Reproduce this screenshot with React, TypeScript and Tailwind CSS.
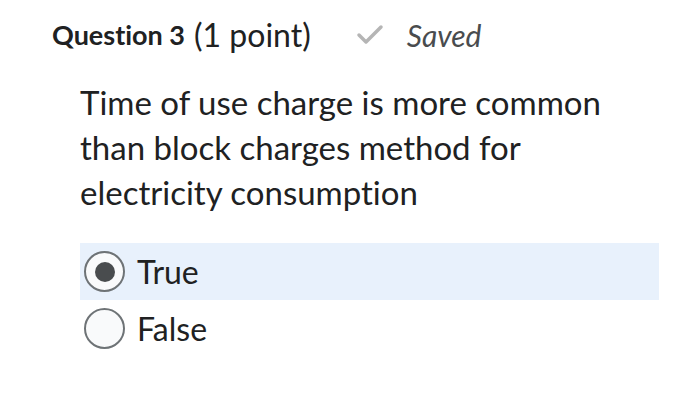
import React from 'react';

const options = [
  { label: 'True', checked: true },
  { label: 'False', checked: false },
];

export default function App() {
  return (
    <div className="w-[700px] h-[414px] bg-white text-[#202122] font-['Lato',sans-serif] [font-variant-ligatures:none]">
      <div className="pt-[23px] pl-[52px] flex items-center h-[47px]">
        <span className="text-[27px] font-bold">Question 3</span>
        <span className="text-[32px] ml-[9px]">(1 point)</span>
        <svg className="ml-[45px]" width="28" height="22" viewBox="0 0 28 22">
          <path d="M3 11 L10 18 L25 3" fill="none" stroke="#b5b5b5" strokeWidth="3.5" strokeLinecap="round" strokeLinejoin="round" />
        </svg>
        <span className="ml-[23px] text-[30px] italic text-[#494c4e]">Saved</span>
      </div>
      <p className="mt-[33px] ml-[80px] w-[560px] text-[33px] leading-[45px]">
        Time of use charge is more common than block charges method for electricity consumption
      </p>
      <div className="mt-[28px] ml-[80px] w-[579px]">
        {options.map((o) => (
          <div key={o.label} className={`flex items-center h-[57px] ${o.checked ? 'bg-[#e8f1fc]' : ''}`}>
            <span className="ml-[4px] w-[41px] h-[41px] rounded-full border-2 border-[#6e7376] bg-[#f9fafb] flex items-center justify-center">
              {o.checked && <span className="w-[20px] h-[20px] rounded-full bg-[#494c4e]" />}
            </span>
            <span className="ml-[12px] text-[32px]">{o.label}</span>
          </div>
        ))}
      </div>
    </div>
  );
}
